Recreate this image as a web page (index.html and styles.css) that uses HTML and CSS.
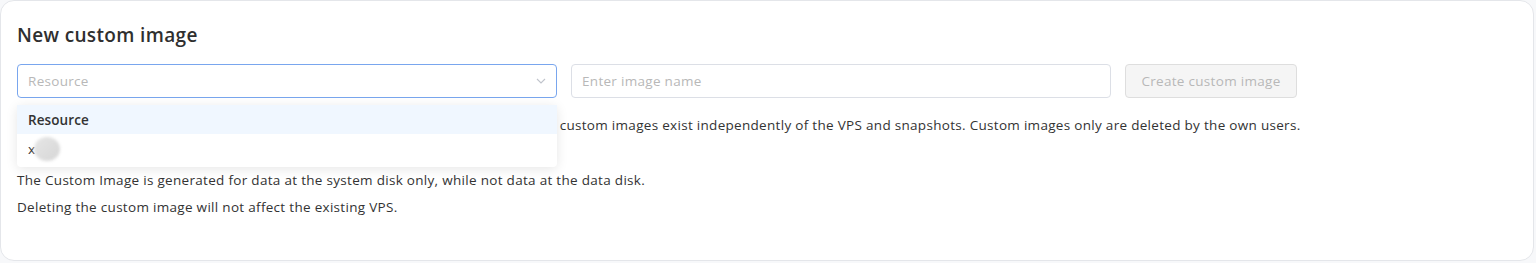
FILE: index.html
```html
<!DOCTYPE html>
<html>
<head>
<meta charset="utf-8">
<link rel="stylesheet" href="styles.css">
</head>
<body>
<div class="card">
  <h2 class="title">New custom image</h2>
  <div class="form-row">
    <div class="select-wrap">
      <div class="select">
        <span class="placeholder">Resource</span>
        <svg class="chevron" width="10" height="6" viewBox="0 0 10 6"><path d="M1 1l4 4 4-4" fill="none" stroke="#c0c4cc" stroke-width="1.1"/></svg>
      </div>
      <div class="dropdown">
        <div class="option option-active">Resource</div>
        <div class="option"><span>x</span><span class="blur"></span></div>
      </div>
    </div>
    <div class="input"><span class="placeholder">Enter image name</span></div>
    <button class="btn" disabled>Create custom image</button>
  </div>
  <div class="notes">
    <p>Custom images let you quickly create a VPS using the same system image, and the custom images exist independently of the VPS and snapshots. Custom images only are deleted by the own users.</p>
    <p>Each account can keep a limited number of custom images in each region.</p>
    <p>The Custom Image is generated for data at the system disk only, while not data at the data disk.</p>
    <p>Deleting the custom image will not affect the existing VPS.</p>
  </div>
</div>
</body>
</html>
```
FILE: styles.css
```css
html, body {
  margin: 0;
  padding: 0;
}
body {
  background: #f7f8fa;
  font-family: "Open Sans", "Liberation Sans", sans-serif;
  color: #333;
  width: 1536px;
  height: 263px;
  overflow: hidden;
}
.card {
  box-sizing: border-box;
  width: 1534px;
  height: 261px;
  background: #fff;
  border: 1px solid #e4e6ea;
  border-radius: 14px;
  padding: 22px 16px 0 16px;
}
.title {
  margin: 0;
  font-size: 19px;
  font-weight: 600;
  letter-spacing: 0.35px;
  line-height: 24px;
  color: #2f2f2f;
}
.form-row {
  display: flex;
  gap: 14px;
  margin-top: 17px;
  height: 34px;
}
.select-wrap {
  position: relative;
  width: 540px;
}
.select {
  box-sizing: border-box;
  height: 34px;
  border: 1px solid #79a6ee;
  border-radius: 4px;
  display: flex;
  align-items: center;
  justify-content: space-between;
  padding: 0 10px 0 10px;
}
.placeholder,
.option,
.btn,
.notes p {
  font-size: 13.5px;
  letter-spacing: 0.3px;
}
.placeholder {
  color: #b8b8b8;
}
.dropdown {
  position: absolute;
  top: 41px;
  left: 0;
  width: 540px;
  background: #fff;
  border-radius: 4px;
  box-shadow: 0 2px 12px rgba(0,0,0,0.10);
  z-index: 5;
}
.option {
  height: 29px;
  display: flex;
  align-items: center;
  padding: 0 11px;
  color: #333;
}
.option-active {
  background: #f0f7ff;
  font-weight: 600;
  letter-spacing: 0.1px;
}
.option:last-child {
  margin-bottom: 4px;
}
.blur {
  display: inline-block;
  width: 26px;
  height: 24px;
  border-radius: 50%;
  background: linear-gradient(135deg, #e6e6e6, #d6d6d6);
  filter: blur(1.5px);
  margin-left: -1px;
}
.input {
  box-sizing: border-box;
  width: 540px;
  height: 34px;
  border: 1px solid #dcdfe6;
  border-radius: 4px;
  display: flex;
  align-items: center;
  padding: 0 10px;
}
.btn {
  box-sizing: border-box;
  width: 172px;
  height: 34px;
  background: #f5f5f5;
  border: 1px solid #dedede;
  border-radius: 4px;
  font-family: inherit;
  color: #b8b8b8;
  padding: 0;
}
.notes {
  margin-top: 14px;
}
.notes p {
  margin: 0;
  line-height: 27.3px;
  color: #333;
}
```
